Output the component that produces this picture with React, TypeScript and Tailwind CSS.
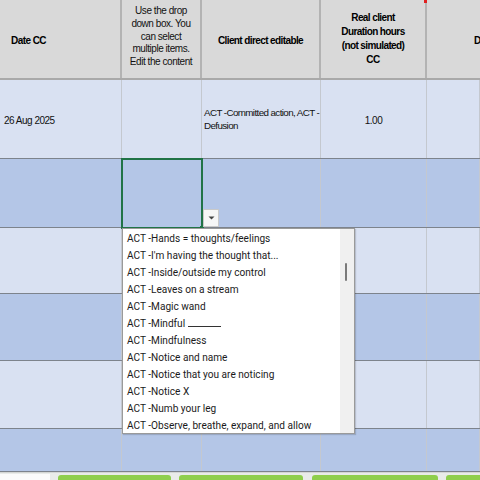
import React from "react";

const COLS = [122, 80, 119, 106, 53];
const LIGHT = "bg-[#d9e1f2]";
const DARK = "bg-[#b4c6e7]";

const cellFont = { fontFamily: '"Liberation Sans", Arial, sans-serif' };
const listFont = { fontFamily: 'Roboto, "Liberation Sans", sans-serif' };

const options = [
  "ACT -Hands = thoughts/feelings",
  "ACT -I'm having the thought that...",
  "ACT -Inside/outside my control",
  "ACT -Leaves on a stream",
  "ACT -Magic wand",
  "ACT -Mindful ________",
  "ACT -Mindfulness",
  "ACT -Notice and name",
  "ACT -Notice that you are noticing",
  "ACT -Notice X",
  "ACT -Numb your leg",
  "ACT -Observe, breathe, expand, and allow",
];

function BodyRow({ h, bg, children }: { h: string; bg: string; children?: React.ReactNode[] }) {
  return (
    <div className={`flex ${h} ${bg} border-b border-[#7d838c] shrink-0`}>
      {COLS.map((w, i) => (
        <div
          key={i}
          style={{ width: w }}
          className="shrink-0 h-full border-r border-[#c4c8cf] flex items-center overflow-hidden"
        >
          {children ? children[i] : null}
        </div>
      ))}
    </div>
  );
}

export default function App() {
  return (
    <div className="relative w-[480px] h-[480px] overflow-hidden bg-white text-black flex flex-col" style={cellFont}>
      {/* header row */}
      <div className="flex h-[80px] shrink-0 bg-[#d9d9d9] border-b-2 border-[#a9a9a9]">
        <div className="w-[122px] shrink-0 border-r-2 border-[#b3b3b3] flex items-center pl-[11px] pt-[2px] text-[10px] tracking-[-0.55px] font-bold">
          Date CC
        </div>
        <div className="w-[80px] shrink-0 border-r-2 border-[#b3b3b3] flex items-center justify-center text-center text-[10px] tracking-[-0.45px] leading-[12.8px] pb-[4px] text-[#111]">
          <span className="whitespace-nowrap">
            Use the drop
            <br />
            down box. You
            <br />
            can select
            <br />
            multiple items.
            <br />
            Edit the content
          </span>
        </div>
        <div className="w-[119px] shrink-0 border-r-2 border-[#b3b3b3] flex items-center justify-center pt-[2px] text-[10px] tracking-[-0.6px] font-bold whitespace-nowrap">
          Client direct editable
        </div>
        <div className="relative w-[106px] shrink-0 border-r-2 border-[#b3b3b3] flex items-center justify-center text-center text-[10px] tracking-[-0.6px] font-bold leading-[14px]">
          <span className="whitespace-nowrap">
            Real client
            <br />
            Duration hours
            <br />
            (not simulated)
            <br />
            CC
          </span>
          <span className="absolute right-[-2px] top-0 w-[3px] h-[3px] bg-[#e02020]" />
        </div>
        <div className="flex-1 flex items-center pl-[47px] pt-[2px] text-[10px] font-bold overflow-hidden whitespace-nowrap">
          D
        </div>
      </div>

      <BodyRow
        h="h-[79px]"
        bg={LIGHT}
        children={[
          <span key="a" className="pl-[4px] pt-[3px] text-[10px] tracking-[-0.5px] text-[#111]">26 Aug 2025</span>,
          null,
          <span key="c" className="pl-[2px] text-[9.8px] tracking-[-0.6px] leading-[13px] whitespace-nowrap text-[#111]">
            ACT -Committed action, ACT -
            <br />
            Defusion
          </span>,
          <span key="d" className="w-full text-center pt-[3px] text-[10px] tracking-[-0.5px] text-[#111]">1.00</span>,
          null,
        ]}
      />
      <BodyRow h="h-[69px]" bg={DARK} />
      <BodyRow h="h-[66px]" bg={LIGHT} />
      <BodyRow h="h-[67px]" bg={DARK} />
      <BodyRow h="h-[68px]" bg={LIGHT} />
      <BodyRow h="h-[43px]" bg={DARK} />

      {/* sheet tabs */}
      <div className="flex-1 bg-[#e9ebe9] border-t border-[#d4d6d4] flex items-end">
        <div className="w-[50px] h-[6px] bg-[#fbfbfb] shrink-0" />
        <div className="w-[8px] shrink-0" />
        <div className="w-[113px] h-[5px] bg-[#8fce4c] rounded-t-[3px] shrink-0" />
        <div className="w-[8px] shrink-0" />
        <div className="w-[124px] h-[5px] bg-[#8fce4c] rounded-t-[3px] shrink-0" />
        <div className="w-[9px] shrink-0" />
        <div className="w-[126px] h-[5px] bg-[#8fce4c] rounded-t-[3px] shrink-0" />
        <div className="w-[8px] shrink-0" />
        <div className="flex-1 h-[5px] bg-[#8fce4c] rounded-tl-[3px]" />
      </div>

      {/* active cell */}
      <div className="absolute left-[121px] top-[158px] w-[82px] h-[71px] border-2 border-[#217346]" />
      <div className="absolute left-[200px] top-[226px] w-[4px] h-[4px] bg-[#217346]" />

      {/* validation drop-down button */}
      <div className="absolute left-[203px] top-[209px] w-[16px] h-[18px] bg-[#f6f6f6] border border-[#c9c9c9] flex items-center justify-center">
        <svg width="7" height="4" viewBox="0 0 7 4">
          <path d="M0.5 0.5 L6.5 0.5 L3.5 3.5 Z" fill="#444" />
        </svg>
      </div>

      {/* validation list */}
      <div
        className="absolute left-[122px] top-[228px] w-[233px] h-[206px] bg-white border border-[#9a9a9a] shadow-[1px_1px_1px_rgba(0,0,0,0.15)] flex"
        style={listFont}
      >
        <div className="flex-1 pt-[1px] pl-[4px] overflow-hidden">
          {options.map((o) => (
            <div key={o} className="h-[17px] flex items-center text-[10.1px] text-[#1b1b1b] whitespace-nowrap">
              {o.includes("____") ? (
                <span>
                  ACT -Mindful <span className="inline-block w-[33px] border-b border-[#333] align-baseline" />
                </span>
              ) : (
                o
              )}
            </div>
          ))}
        </div>
        <div className="w-[14px] h-full bg-[#f0f0f0] relative shrink-0">
          <div className="absolute left-[5px] top-[34px] w-[2px] h-[18px] bg-[#7a7a7a] rounded-[1px]" />
        </div>
      </div>
    </div>
  );
}
